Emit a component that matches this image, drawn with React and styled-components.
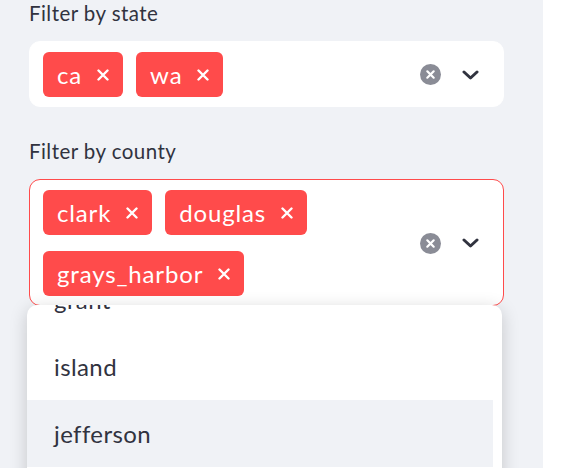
import React from 'react';
import styled, { createGlobalStyle } from 'styled-components';

const GlobalStyle = createGlobalStyle`
  html, body {
    margin: 0;
    padding: 0;
    background: #ffffff;
  }
  body {
    font-family: Lato, "Noto Sans", sans-serif;
    color: #31333f;
  }
`;

const filters = [
  { id: 'state', label: 'Filter by state', values: ['ca', 'wa'], focused: false },
  { id: 'county', label: 'Filter by county', values: ['clark', 'douglas', 'grays_harbor'], focused: true },
];

const options = ['grant', 'island', 'jefferson', 'king'];
const hovered = 'jefferson';

const Page = styled.div`
  display: flex;
  height: 100vh;
  overflow: hidden;
`;

const Sidebar = styled.div`
  width: 543px;
  background: #f0f2f6;
  padding: 0 39px 0 29px;
  box-sizing: border-box;
`;

const Field = styled.div`
  position: relative;
  margin-bottom: 31px;
`;

const Label = styled.div`
  font-size: 20.5px;
  letter-spacing: 0.45px;
  line-height: 27px;
  height: 28px;
  margin-bottom: 13px;
  color: #31333f;
`;

const Control = styled.div`
  display: flex;
  align-items: center;
  background: #ffffff;
  border: 1px solid ${(p) => (p.focused ? '#ff4b4b' : '#ffffff')};
  border-radius: 11px;
  padding: 10px 24px 9px 13px;
`;

const Tags = styled.div`
  flex: 1;
  display: flex;
  flex-wrap: wrap;
  column-gap: 13px;
  row-gap: 16px;
`;

const Tag = styled.div`
  display: flex;
  align-items: center;
  height: 45px;
  padding: 0 14px;
  background: #ff4b4b;
  color: #ffffff;
  border-radius: 6px;
  font-size: 24px;
  letter-spacing: 0.85px;
`;

const TagClose = styled.svg`
  width: 12px;
  height: 12px;
  margin-left: 15px;
`;

const Icons = styled.div`
  display: flex;
  align-items: center;
  gap: 21px;
`;

const ClearIcon = styled.svg`
  width: 21px;
  height: 21px;
  display: block;
`;

const Chevron = styled.svg`
  width: 17px;
  height: 10px;
  display: block;
`;

const Menu = styled.div`
  position: absolute;
  left: -2px;
  width: 475px;
  top: calc(100% - 1px);
  height: 200px;
  background: #ffffff;
  border-radius: 10px 10px 0 0;
  box-shadow: 0 4px 18px rgba(0, 0, 0, 0.18);
  overflow: hidden;
  padding-right: 9px;
  box-sizing: border-box;
`;

const Options = styled.div`
  margin-top: -39px;
`;

const Option = styled.div`
  height: 67px;
  display: flex;
  align-items: center;
  padding-left: 27px;
  font-size: 24px;
  letter-spacing: 0.4px;
  color: #31333f;
  background: ${(p) => (p.active ? '#f0f2f6' : 'transparent')};
`;

const Rest = styled.div`
  flex: 1;
  background: #ffffff;
`;

function CloseX() {
  return (
    <TagClose viewBox="0 0 12 12">
      <path d="M1.5 1.5 L10.5 10.5 M10.5 1.5 L1.5 10.5" stroke="#ffffff" strokeWidth="2.4" strokeLinecap="round" />
    </TagClose>
  );
}

function MultiSelect({ label, values, focused, children }) {
  return (
    <Field>
      <Label>{label}</Label>
      <Control focused={focused}>
        <Tags>
          {values.map((v) => (
            <Tag key={v}>
              {v}
              <CloseX />
            </Tag>
          ))}
        </Tags>
        <Icons>
          <ClearIcon viewBox="0 0 21 21">
            <circle cx="10.5" cy="10.5" r="10.5" fill="#8a8c96" />
            <path d="M7.3 7.3 L13.7 13.7 M13.7 7.3 L7.3 13.7" stroke="#ffffff" strokeWidth="2.2" strokeLinecap="round" />
          </ClearIcon>
          <Chevron viewBox="0 0 17 10">
            <path d="M2 2 L8.5 8 L15 2" fill="none" stroke="#31333f" strokeWidth="3" strokeLinecap="round" strokeLinejoin="round" />
          </Chevron>
        </Icons>
      </Control>
      {children}
    </Field>
  );
}

export default function App() {
  return (
    <Page>
      <GlobalStyle />
      <Sidebar>
        {filters.map((f) => (
          <MultiSelect key={f.id} label={f.label} values={f.values} focused={f.focused}>
            {f.focused && (
              <Menu>
                <Options>
                  {options.map((o) => (
                    <Option key={o} active={o === hovered}>{o}</Option>
                  ))}
                </Options>
              </Menu>
            )}
          </MultiSelect>
        ))}
      </Sidebar>
      <Rest />
    </Page>
  );
}
